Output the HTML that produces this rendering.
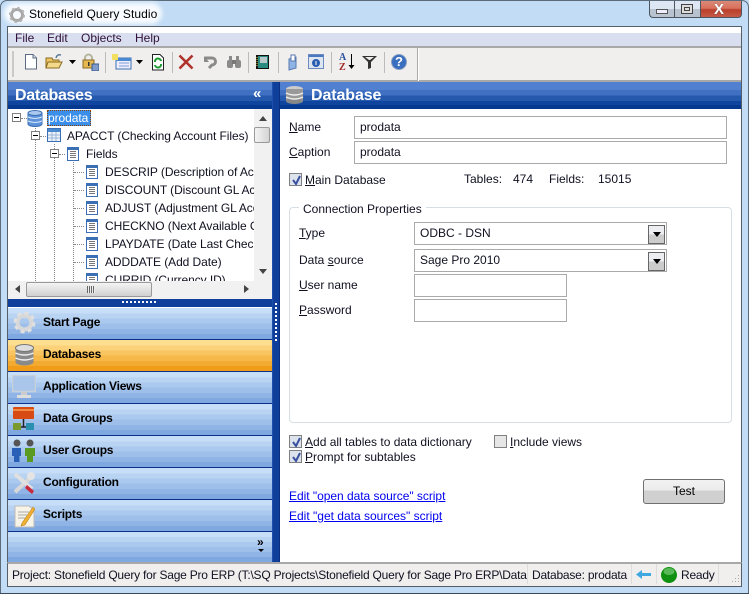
<!DOCTYPE html>
<html><head><meta charset="utf-8"><style>
*{box-sizing:border-box}
html,body{margin:0;padding:0;width:749px;height:594px;overflow:hidden;background:#c2dcf5}
body{position:relative;font:12px/14px "Liberation Sans",sans-serif;color:#101020}
.a,.t,svg{position:absolute}
.t{white-space:nowrap}
u{text-decoration:underline}
.bar{background:linear-gradient(#c6def7 0,#c6def7 17%,#b9d3f2 17%,#b9d3f2 34%,#abc9ee 34%,#abc9ee 50%,#9dbfea 50%,#9dbfea 67%,#8fb4e5 67%,#8fb4e5 84%,#7fa8e0 84%,#7fa8e0 100%);border-bottom:1px solid #0a2f8c;left:8px;width:264px;height:32px}
.sel{background:linear-gradient(#fddf8f 0,#fddf8f 17%,#fbd27a 17%,#fbd27a 34%,#f9c560 34%,#f9c560 50%,#f6b848 50%,#f6b848 67%,#f3aa30 67%,#f3aa30 84%,#f09c18 84%,#f09c18 100%)}
.nl{left:43px;font-weight:bold;font-size:12px;color:#000;letter-spacing:-.22px}
.hd{background:linear-gradient(#5080cf 0,#5080cf 30%,#3f70c2 30%,#3f70c2 50%,#2459ae 50%,#2459ae 70%,#0f459f 70%,#0f459f 85%,#05388f 85%);height:27px;top:82px}
.ht{color:#fff;font-weight:bold;font-size:16px;line-height:18px;top:87px}
.in{border:1px solid #aaa;background:#fff;padding:3px 5px;height:23px}
.dd{position:absolute;right:1px;top:2px;width:17px;height:19px;border:1px solid #666;background:linear-gradient(#eceef2 50%,#ccc 50%)}
.dd:after{content:"";position:absolute;left:4px;top:6px;border:4px solid transparent;border-top:5px solid #000;border-bottom:0}
.cb{position:absolute;width:13px;height:13px;border:1px solid #808080;background:#dde3ec}
.cb svg{left:1px;top:1px}
a{color:#0000ee;text-decoration:underline}
.ic{position:absolute;width:10px;height:13px;background:#fff;border:1px solid #3a6fb5;border-top:3px solid #3a6fb5}
.ic:after{content:"";position:absolute;left:2px;right:2px;top:1px;height:7px;background:repeating-linear-gradient(#777 0 1px,#fff 1px 2px)}
.s{position:absolute;background:#bbb;width:1px;top:52px;height:21px}
.ss{position:absolute;background:#ddd;width:1px;top:564px;height:20px}
.dot{position:absolute;border-left:1px dotted #888}
.dh{position:absolute;border-top:1px dotted #888}
.box{position:absolute;width:9px;height:9px;border:1px solid #808080;background:#fff}
.box:after{content:"";position:absolute;left:1px;top:3px;width:5px;height:1px;background:#000}
.tr{letter-spacing:-.07px}
.st{letter-spacing:-.22px}
</style></head><body>
<!-- frame -->
<div class="a" style="left:0;top:0;width:749px;height:594px;border:1px solid #5c6b7a;border-radius:7px 7px 0 0;background:#c2dcf5"></div>
<div class="a" style="left:4px;top:3px;width:158px;height:21px;background:#f8fbff;border-radius:11px;filter:blur(2.500px)"></div>
<svg style="left:8px;top:6px" width="18" height="18" viewBox="0 0 18 18"><circle cx="9" cy="9" r="5.500" fill="none" stroke="#a8a8a8" stroke-width="3"/><circle cx="9" cy="9" r="7" fill="none" stroke="#b5b5b5" stroke-width="2.200" stroke-dasharray="2.400 3.100"/></svg>
<div class="t" style="left:29px;top:7px;font-size:12px;letter-spacing:.07px;color:#000">Stonefield Query Studio</div>
<!-- caption buttons -->
<div class="a" style="left:649px;top:1px;width:25px;height:17px;border:1px solid #4a5560;border-right:0;border-top:0;border-radius:0 0 0 4px;background:linear-gradient(#dce7f3 50%,#b9c3cf 50%)"></div>
<div class="a" style="left:674px;top:1px;width:26px;height:17px;border:1px solid #4a5560;border-right:0;border-top:0;background:linear-gradient(#dce7f3 50%,#b9c3cf 50%)"></div>
<div class="a" style="left:700px;top:1px;width:42px;height:17px;border:1px solid #4a5560;border-top:0;border-radius:0 0 4px 0;background:linear-gradient(#d98a78 0,#d9705c 45%,#b8402c 55%,#c85a48)"></div>
<div class="a" style="left:656px;top:9px;width:12px;height:5px;border:1px solid #555;background:#eef"></div>
<div class="a" style="left:681px;top:4px;width:12px;height:10px;border:1px solid #444;background:#ddd"><div class="a" style="left:2px;top:2px;width:6px;height:4px;border:1px solid #444"></div></div>
<div class="t" style="left:714px;top:1px;color:#fff;font-weight:bold;font-size:15px;line-height:17px;text-shadow:0 0 1px #444">X</div>
<!-- client -->
<div class="a" style="left:7px;top:26px;width:735px;height:561px;border:1px solid #555f68;background:#fff"></div>
<div class="a" style="left:8px;top:33px;width:733px;height:13px;background:#d9dfee"></div>
<div class="a" style="left:8px;top:46px;width:733px;height:2px;background:#a9a9a9"></div>
<div class="t" style="left:15px;top:31px;color:#30103a">File</div>
<div class="t" style="left:47px;top:31px;color:#30103a">Edit</div>
<div class="t" style="left:81px;top:31px;color:#30103a">Objects</div>
<div class="t" style="left:135px;top:31px;color:#30103a">Help</div>
<!-- toolbar -->
<div class="a" style="left:8px;top:48px;width:733px;height:33px;background:#f0efed"></div>
<div class="a" style="left:8px;top:80px;width:733px;height:2px;background:#a9a9a9"></div>
<div class="a" style="left:417px;top:48px;width:2px;height:33px;background:#a9a9a9;border-right:1px solid #fff"></div>
<div class="a" style="left:12px;top:51px;width:2px;height:26px;background:#c9c9c9"></div>
<svg style="left:24px;top:54px" width="14" height="16"><path d="M1.500 .5H9L12.500 4V15H1.500Z" fill="#fff" stroke="#5a6a80"/><path d="M9 .5V4H12.500" fill="#dde" stroke="#5a6a80"/></svg>
<svg style="left:45px;top:53px" width="18" height="17"><path d="M1 5H7L8 7H14V15H1Z" fill="#eec560" stroke="#8a6a20"/><path d="M3 9H17L14 15H1Z" fill="#f5d98a" stroke="#8a6a20"/><path d="M11 5Q12 1 16 2" fill="none" stroke="#5a7a9a" stroke-width="1.500"/></svg>
<svg style="left:69px;top:60px" width="7" height="4"><path d="M0 0H7L3.500 4Z" fill="#000"/></svg>
<svg style="left:82px;top:53px" width="17" height="18"><path d="M3 8V5A3.500 3.500 0 0 1 10 5V8" fill="none" stroke="#b5b5a0" stroke-width="2"/><rect x="1" y="7" width="11" height="8" fill="#e8b850" stroke="#8a6a20"/><rect x="10" y="11" width="7" height="7" fill="#7f9ccb" stroke="#3a5a8a"/><rect x="6" y="9" width="1.500" height="4" fill="#333"/></svg>
<div class="s" style="left:105px"></div>
<svg style="left:112px;top:54px" width="20" height="16"><rect x="4" y="4" width="15" height="11" fill="#eef" stroke="#3a70b0"/><rect x="4" y="4" width="15" height="3" fill="#4a88d0"/><path d="M7 9H17M7 12H17" stroke="#7aa0d0"/><rect x="0" y="0" width="6" height="6" fill="#f4e060"/></svg>
<svg style="left:136px;top:60px" width="7" height="4"><path d="M0 0H7L3.500 4Z" fill="#000"/></svg>
<svg style="left:151px;top:54px" width="14" height="17"><path d="M1.500 .5H9L12.500 4V16H1.500Z" fill="#fff" stroke="#222"/><path d="M4 8A3 3 0 0 1 10 7M10 10A3 3 0 0 1 4 11" fill="none" stroke="#1a9a30" stroke-width="2"/></svg>
<div class="s" style="left:172px"></div>
<svg style="left:178px;top:54px" width="16" height="16"><path d="M1.500 1.500L14.500 14.500M14.500 1.500L1.500 14.500" stroke="#b0322c" stroke-width="2.600"/></svg>
<svg style="left:203px;top:55px" width="14" height="14"><path d="M2 3H9A3 3 0 0 1 9 10L6 13" fill="none" stroke="#8a8a8a" stroke-width="3"/><path d="M1 1V7H6" fill="#8a8a8a"/></svg>
<svg style="left:226px;top:55px" width="16" height="14"><rect x="1" y="5" width="6" height="8" rx="2" fill="#8a8a8a"/><rect x="9" y="5" width="6" height="8" rx="2" fill="#8a8a8a"/><rect x="3" y="1" width="3" height="6" fill="#8a8a8a"/><rect x="10" y="1" width="3" height="6" fill="#8a8a8a"/><rect x="6" y="5" width="4" height="4" fill="#777"/></svg>
<div class="s" style="left:248px"></div>
<svg style="left:256px;top:55px" width="13" height="14"><rect x="0" y="0" width="13" height="14" fill="#111"/><rect x="2" y="1" width="10" height="12" fill="#2a8a80"/><rect x="4" y="2" width="7" height="6" fill="#b8c8c8"/><path d="M1 2V12" stroke="#e8d040" stroke-dasharray="1 1"/></svg>
<div class="s" style="left:278px"></div>
<svg style="left:288px;top:54px" width="10" height="17"><path d="M1 5L8 3V14L1 16Z" fill="#8fb4e5" stroke="#5a7ab0"/><path d="M3 1H7V7H3Z" fill="#fff" stroke="#5a7ab0"/></svg>
<svg style="left:308px;top:54px" width="16" height="15"><rect x=".5" y=".5" width="15" height="14" fill="#dde5f0" stroke="#6a8ac0"/><rect x="1" y="1" width="14" height="2" fill="#4a78c0"/><circle cx="8" cy="9" r="4" fill="#2a5eb0"/><path d="M8 7V11" stroke="#fff"/></svg>
<div class="s" style="left:331px"></div>
<div class="t" style="left:339px;top:52px;font:bold 10px/11px 'Liberation Serif',serif;color:#2a4fa0">A</div>
<div class="t" style="left:339px;top:62px;font:bold 10px/11px 'Liberation Serif',serif;color:#a02a2a">Z</div>
<svg style="left:348px;top:54px" width="7" height="16"><path d="M3.500 0V12" stroke="#000"/><path d="M.5 11H6.500L3.500 15Z" fill="#000"/></svg>
<svg style="left:362px;top:56px" width="15" height="13"><path d="M0 0H15L9 6V12L6 13V6Z" fill="#333"/><path d="M3 1H12L8 4H7Z" fill="#eee"/></svg>
<div class="s" style="left:384px"></div>
<svg style="left:391px;top:54px" width="16" height="16"><circle cx="8" cy="8" r="7.500" fill="#3a6fc0" stroke="#8aa0c0"/></svg>
<div class="t" style="left:395px;top:55px;color:#fff;font-weight:bold;font-size:13px">?</div>
<!-- left pane -->
<div class="a hd" style="left:8px;width:264px"></div>
<div class="t ht" style="left:15px;letter-spacing:-.3px">Databases</div>
<div class="t" style="left:253px;top:87px;color:#fff;font-weight:bold;font-size:15px">«</div>
<div class="a" style="left:272px;top:82px;width:8px;height:480px;background:#0f3f9a;border-left:1px solid #1c50aa;border-right:1px solid #0a2f80"></div>
<div class="a hd" style="left:280px;width:461px"></div>
<svg style="left:285px;top:85px" width="19" height="20"><ellipse cx="9.500" cy="4" rx="8.500" ry="3" fill="#ccc"/><rect x="1" y="4" width="17" height="12" fill="#999"/><ellipse cx="9.500" cy="16" rx="8.500" ry="3" fill="#888"/><path d="M1 8Q9.500 12 18 8M1 12Q9.500 16 18 12" fill="none" stroke="#eee" stroke-width="1.500"/></svg>
<div class="t ht" style="left:311px;letter-spacing:-.1px">Database</div>
<!-- tree -->
<div class="a tr" style="left:8px;top:109px;width:264px;height:190px;background:#fff;overflow:hidden">
 <div class="dot" style="left:27px;top:17px;height:173px"></div>
 <div class="dot" style="left:46px;top:35px;height:155px"></div>
 <div class="dot" style="left:65px;top:53px;height:137px"></div>
 <div class="dh" style="left:13px;top:9px;width:6px"></div>
 <div class="dh" style="left:32px;top:27px;width:6px"></div>
 <div class="dh" style="left:51px;top:45px;width:6px"></div>
 <div class="dh" style="left:66px;top:63px;width:10px"></div>
 <div class="dh" style="left:66px;top:81px;width:10px"></div>
 <div class="dh" style="left:66px;top:99px;width:10px"></div>
 <div class="dh" style="left:66px;top:117px;width:10px"></div>
 <div class="dh" style="left:66px;top:135px;width:10px"></div>
 <div class="dh" style="left:66px;top:153px;width:10px"></div>
 <div class="box" style="left:4px;top:4px"></div><div class="box" style="left:23px;top:22px"></div><div class="box" style="left:42px;top:40px"></div>
 <svg style="left:19px;top:1px" width="16" height="17"><path d="M1 3V14A7 2.500 0 0 0 15 14V3" fill="#5f94dc" stroke="#3a6fb5"/><ellipse cx="8" cy="3" rx="7" ry="2.500" fill="#aac8ee" stroke="#3a6fb5"/><path d="M1 7Q8 10 15 7M1 11Q8 14 15 11" fill="none" stroke="#dbe8f8"/></svg>
 <div class="a" style="left:39px;top:1px;width:44px;height:16px;background:#3b8fe8;outline:1px dotted #8a4000;outline-offset:-1px"></div>
 <div class="t" style="left:40px;top:2px;color:#fff">prodata</div>
 <svg style="left:39px;top:19px" width="15" height="15"><rect x=".5" y=".5" width="13" height="13" fill="#eef3fa" stroke="#3a6fb5"/><rect x="1" y="1" width="12" height="3" fill="#4a88d0"/><path d="M1 7H13M1 10H13M5 4V13M9 4V13" stroke="#9ab4d8"/></svg>
 <div class="t" style="left:59px;top:20px">APACCT (Checking Account Files)</div>
 <div class="ic" style="left:59px;top:38px;width:12px;height:14px"></div>
 <div class="t" style="left:78px;top:38px">Fields</div>
 <div class="ic" style="left:78px;top:56px;width:12px;height:14px"></div><div class="t" style="left:97px;top:56px;width:149px;overflow:hidden">DESCRIP (Description of Account)</div>
 <div class="ic" style="left:78px;top:74px;width:12px;height:14px"></div><div class="t" style="left:97px;top:74px;width:149px;overflow:hidden">DISCOUNT (Discount GL Account)</div>
 <div class="ic" style="left:78px;top:92px;width:12px;height:14px"></div><div class="t" style="left:97px;top:92px;width:149px;overflow:hidden">ADJUST (Adjustment GL Account)</div>
 <div class="ic" style="left:78px;top:110px;width:12px;height:14px"></div><div class="t" style="left:97px;top:110px;width:149px;overflow:hidden">CHECKNO (Next Available Check)</div>
 <div class="ic" style="left:78px;top:128px;width:12px;height:14px"></div><div class="t" style="left:97px;top:128px;width:149px;overflow:hidden">LPAYDATE (Date Last Check)</div>
 <div class="ic" style="left:78px;top:146px;width:12px;height:14px"></div><div class="t" style="left:97px;top:146px">ADDDATE (Add Date)</div>
 <div class="ic" style="left:78px;top:164px;width:12px;height:14px"></div><div class="t" style="left:97px;top:164px">CURRID (Currency ID)</div>
 <!-- scrollbars -->
 <div class="a" style="left:246px;top:0;width:18px;height:172px;background:#f1f1f1"></div>
 <div class="a" style="left:246px;top:18px;width:16px;height:16px;background:linear-gradient(90deg,#f4f4f4,#d4d4d4);border:1px solid #999;border-radius:2px"></div>
 <div class="a" style="left:0;top:172px;width:264px;height:18px;background:#f1f1f1"></div>
 <div class="a" style="left:18px;top:173px;width:126px;height:15px;background:linear-gradient(#f4f4f4,#d0d0d0);border:1px solid #999;border-radius:2px"></div>
 <div class="a" style="left:79px;top:177px;width:8px;height:7px;background:repeating-linear-gradient(90deg,#666 0 1px,#eee 1px 2px)"></div>
 <svg style="left:251px;top:7px" width="8" height="5"><path d="M0 5H8L4 0Z" fill="#444"/></svg>
 <svg style="left:251px;top:160px" width="8" height="5"><path d="M0 0H8L4 5Z" fill="#444"/></svg>
 <svg style="left:7px;top:176px" width="5" height="8"><path d="M5 0V8L0 4Z" fill="#444"/></svg>
 <svg style="left:236px;top:176px" width="5" height="8"><path d="M0 0V8L5 4Z" fill="#444"/></svg>
</div>
<!-- splitter -->
<div class="a" style="left:8px;top:299px;width:264px;height:8px;background:#0f3f9a"></div>
<div class="a" style="left:122px;top:301px;width:35px;height:2px;background:repeating-linear-gradient(90deg,#fff 0 2px,transparent 2px 4px)"></div>
<div class="a" style="left:275px;top:303px;width:2px;height:40px;background:repeating-linear-gradient(#fff 0 2px,transparent 2px 4px)"></div>
<!-- nav -->
<div class="a bar" style="top:308px"></div>
<div class="a bar sel" style="top:340px"></div>
<div class="a bar" style="top:372px"></div>
<div class="a bar" style="top:404px"></div>
<div class="a bar" style="top:436px"></div>
<div class="a bar" style="top:468px"></div>
<div class="a bar" style="top:500px"></div>
<div class="a bar" style="top:532px;height:30px;border-bottom:0"></div>
<div class="t nl" style="top:315px">Start Page</div>
<div class="t nl" style="top:347px">Databases</div>
<div class="t nl" style="top:379px">Application Views</div>
<div class="t nl" style="top:411px">Data Groups</div>
<div class="t nl" style="top:443px">User Groups</div>
<div class="t nl" style="top:475px">Configuration</div>
<div class="t nl" style="top:507px">Scripts</div>
<svg style="left:13px;top:311px" width="23" height="23"><circle cx="11.500" cy="11.500" r="7" fill="none" stroke="#d8d8d8" stroke-width="4"/><circle cx="11.500" cy="11.500" r="9.500" fill="none" stroke="#e0e0e0" stroke-width="3" stroke-dasharray="4 3.400"/></svg>
<svg style="left:15px;top:344px" width="19" height="22"><path d="M.5 4V18A9 3.500 0 0 0 18.500 18V4" fill="#8a8a8a"/><ellipse cx="9.500" cy="4" rx="9" ry="3.500" fill="#ddd" stroke="#777"/><path d="M.5 9Q9.500 13 18.500 9M.5 14Q9.500 18 18.500 14" fill="none" stroke="#eee" stroke-width="1.500"/></svg>
<svg style="left:12px;top:375px" width="24" height="24"><rect x=".5" y=".5" width="23" height="16" fill="#a9c6ea" stroke="#c8d0da" stroke-width="1.500"/><rect x="9" y="17" width="6" height="4" fill="#ccc"/><rect x="5" y="20" width="14" height="3" fill="#ddd"/></svg>
<svg style="left:13px;top:407px" width="21" height="24"><rect x="0" y="0" width="21" height="12" rx="1" fill="#d84a14"/><rect x="0" y="2" width="21" height="2" fill="#f08a40"/><path d="M10.500 12V20M6 20H15" stroke="#222" stroke-width="1.500"/><rect x="0" y="16" width="8" height="7" fill="#7a9a30"/><rect x="13" y="16" width="8" height="7" fill="#2a90b0"/></svg>
<svg style="left:12px;top:439px" width="24" height="24"><circle cx="5" cy="4" r="3.500" fill="#555"/><path d="M0 9H9V17H7.500V23H2V17H0Z" fill="#2860b8"/><circle cx="18" cy="4" r="3.500" fill="#555"/><path d="M13 9H23V17H21V23H15V17H13Z" fill="#5a9a20"/></svg>
<svg style="left:12px;top:471px" width="24" height="24"><path d="M3 21L19 6" stroke="#d8d8d8" stroke-width="4"/><path d="M3 3L20 18" stroke="#e0e0e0" stroke-width="4"/><path d="M15 14L22 20L20 23L13 17Z" fill="#c8283c"/><circle cx="19" cy="5" r="4" fill="#e4e4e4"/></svg>
<svg style="left:14px;top:503px" width="22" height="25"><path d="M1 3H15L20 7V24H1Z" fill="#f7f3e6" stroke="#bbb"/><path d="M4 9H15M4 12H15M4 15H13" stroke="#aaa"/><path d="M8 20L19 4L21 6L11 22L7 23Z" fill="#f0b030" stroke="#b07010" stroke-width=".5"/></svg>
<div class="t" style="left:257px;top:536px;font:bold 12px/12px 'Liberation Sans',sans-serif;color:#000">»</div>
<svg style="left:258px;top:549px" width="6" height="3"><path d="M0 0H6L3 3Z" fill="#000"/></svg>
<!-- right content -->
<div class="t" style="left:289px;top:120px"><u>N</u>ame</div>
<div class="a in" style="left:354px;top:116px;width:373px">prodata</div>
<div class="t" style="left:289px;top:145px"><u>C</u>aption</div>
<div class="a in" style="left:354px;top:141px;width:373px">prodata</div>
<div class="cb" style="left:289px;top:173px"><svg width="11" height="11"><path d="M2 5L5 9L9 1" fill="none" stroke="#3a50a0" stroke-width="2"/></svg></div>
<div class="t" style="left:305px;top:173px"><u>M</u>ain Database</div>
<div class="t" style="left:464px;top:172px">Tables:</div>
<div class="t" style="left:513px;top:172px">474</div>
<div class="t" style="left:549px;top:172px">Fields:</div>
<div class="t" style="left:598px;top:172px">15015</div>
<div class="a" style="left:289px;top:207px;width:443px;height:216px;border:1px solid #d5dfe5;border-radius:4px"></div>
<div class="t" style="left:299px;top:202px;background:#fff;padding:0 4px;">Connection Properties</div>
<div class="t" style="left:299px;top:226px"><u>T</u>ype</div>
<div class="a in" style="left:414px;top:222px;width:253px">ODBC - DSN<div class="dd"></div></div>
<div class="t" style="left:299px;top:253px">Data <u>s</u>ource</div>
<div class="a in" style="left:414px;top:249px;width:253px">Sage Pro 2010<div class="dd"></div></div>
<div class="t" style="left:299px;top:278px"><u>U</u>ser name</div>
<div class="a in" style="left:414px;top:274px;width:153px"></div>
<div class="t" style="left:299px;top:303px"><u>P</u>assword</div>
<div class="a in" style="left:414px;top:299px;width:153px"></div>
<div class="cb" style="left:289px;top:435px"><svg width="11" height="11"><path d="M2 5L5 9L9 1" fill="none" stroke="#3a50a0" stroke-width="2"/></svg></div>
<div class="t" style="left:305px;top:435px"><u>A</u>dd all tables to data dictionary</div>
<div class="cb" style="left:494px;top:435px;background:#e6e6e6"></div>
<div class="t" style="left:510px;top:435px"><u>I</u>nclude views</div>
<div class="cb" style="left:289px;top:450px"><svg width="11" height="11"><path d="M2 5L5 9L9 1" fill="none" stroke="#3a50a0" stroke-width="2"/></svg></div>
<div class="t" style="left:305px;top:450px"><u>P</u>rompt for subtables</div>
<div class="t" style="left:289px;top:489px;letter-spacing:-.03px"><a>Edit "open data source" script</a></div>
<div class="t" style="left:289px;top:509px"><a>Edit "get data sources" script</a></div>
<div class="a" style="left:643px;top:479px;width:82px;height:25px;border:1px solid #707070;border-radius:3px;background:linear-gradient(#f2f2f2 0,#ebebeb 45%,#d0d0d0 45%,#cfcfcf);text-align:center;line-height:23px;color:#000">Test</div>
<!-- status -->
<div class="a" style="left:7px;top:562px;width:735px;height:25px;background:#f0efed;border-top:2px solid #a9a9a9;border-left:1px solid #555f68;border-right:1px solid #555f68;border-bottom:1px solid #555f68"></div>
<div class="t st" style="left:12px;top:568px;width:515px;overflow:hidden">Project: Stonefield Query for Sage Pro ERP (T:\SQ Projects\Stonefield Query for Sage Pro ERP\Data</div>
<div class="ss" style="left:527px"></div>
<div class="t st" style="left:532px;top:568px">Database: prodata</div>
<div class="ss" style="left:631px"></div>
<svg style="left:636px;top:570px" width="15" height="9"><path d="M0 4.500L6 0V3H15V6H6V9Z" fill="#3fa8e0"/></svg>
<div class="ss" style="left:656px"></div>
<svg style="left:661px;top:567px" width="16" height="16"><circle cx="8" cy="8" r="8" fill="#109010"/><ellipse cx="8" cy="4.500" rx="5.500" ry="3.500" fill="#58b858"/></svg>
<div class="t st" style="left:681px;top:568px">Ready</div>
<div class="ss" style="left:718px"></div>
<svg style="left:731px;top:574px" width="9" height="9"><path d="M7 1h1v1h-1zM4 4h1v1h-1zM7 4h1v1h-1zM1 7h1v1h-1zM4 7h1v1h-1zM7 7h1v1h-1z" fill="#aaa"/></svg>
<div class="a" style="left:0;top:593px;width:749px;height:1px;background:#3a4a58"></div>
</body></html>
